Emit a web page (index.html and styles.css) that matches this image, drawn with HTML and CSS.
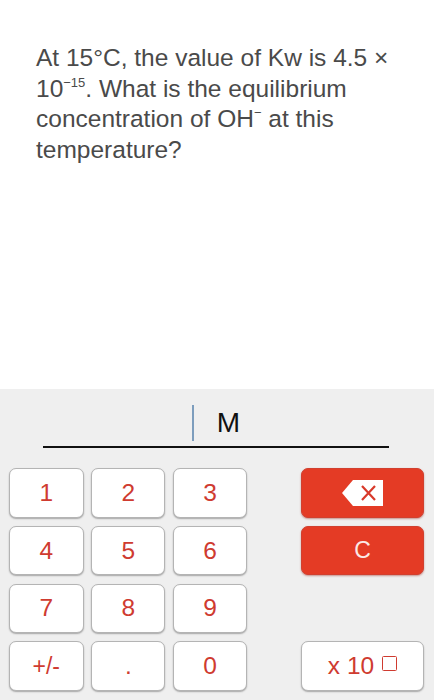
FILE: index.html
```html
<!DOCTYPE html>
<html>
<head>
<meta charset="utf-8">
<link rel="stylesheet" href="styles.css">
</head>
<body>
<div class="question">
  <p>At 15°C, the value of Kw is 4.5 × 10<sup>−15</sup>. What is the equilibrium concentration of OH<sup>−</sup> at this temperature?</p>
</div>
<div class="panel">
  <div class="display">
    <span class="cursor"></span>
    <span class="unit">M</span>
  </div>
  <div class="rule"></div>
  <div class="keys">
    <button class="key">1</button>
    <button class="key">2</button>
    <button class="key">3</button>
    <span class="spacer"></span>
    <button class="key red">
      <svg width="42" height="26" viewBox="0 0 42 26">
        <path d="M11 0 H41 V26 H11 L0 13 Z" fill="#fff"/>
        <path d="M20 6 L33 20 M33 6 L20 20" stroke="#d8392a" stroke-width="2.2" fill="none"/>
      </svg>
    </button>
    <button class="key">4</button>
    <button class="key">5</button>
    <button class="key">6</button>
    <span class="spacer"></span>
    <button class="key red"><span class="ctext">C</span></button>
    <button class="key">7</button>
    <button class="key">8</button>
    <button class="key">9</button>
    <span class="spacer"></span>
    <span class="spacer"></span>
    <button class="key small">+/-</button>
    <button class="key">.</button>
    <button class="key">0</button>
    <span class="spacer"></span>
    <button class="key exp">x 10<span class="box"></span></button>
  </div>
</div>
</body>
</html>
```

FILE: styles.css
```css
html, body {
  margin: 0;
  padding: 0;
  background: #fff;
  font-family: "Liberation Sans", Arial, sans-serif;
}
body {
  width: 434px;
  height: 700px;
  display: flex;
  flex-direction: column;
}
.question {
  height: 389px;
  box-sizing: border-box;
  padding: 43px 24px 0 36px;
}
.question p {
  margin: 0;
  font-size: 24.5px;
  line-height: 30.5px;
  color: #4a4a4a;
}
.question sup {
  font-size: 13px;
  line-height: 0;
  vertical-align: 10px;
}
.panel {
  flex: 1;
  background: #efefef;
  padding-top: 16px;
}
.display {
  height: 36px;
  display: flex;
  align-items: center;
  justify-content: center;
  gap: 23px;
  padding-right: 2px;
}
.cursor {
  width: 2px;
  height: 36px;
  background: #7d9dbd;
}
.unit {
  font-size: 28px;
  color: #111;
  line-height: 36px;
}
.rule {
  height: 2px;
  margin: 5px 45px 0 43px;
  background: #111;
}
.keys {
  margin-top: 20px;
  padding: 0 10px 0 9px;
  display: grid;
  grid-template-columns: 74.5px 74px 74px 1fr 123px;
  grid-auto-rows: 49.5px;
  column-gap: 7.8px;
  row-gap: 8.3px;
}
.key {
  margin: 0;
  padding: 0;
  border: 1px solid #b4b4b4;
  border-radius: 7px;
  background: #fff;
  box-shadow: 0 1px 1.5px rgba(0, 0, 0, 0.3);
  font-family: "Liberation Sans", Arial, sans-serif;
  font-size: 24.5px;
  color: #cf3b30;
  display: flex;
  align-items: center;
  justify-content: center;
}
.key.small {
  font-size: 23px;
}
.key.red {
  background: #e43b25;
  border-color: #d1402f;
  box-shadow: 0 1px 2px rgba(150, 30, 20, 0.45);
}
.ctext {
  color: #fbe9e6;
  font-size: 23px;
}
.exp {
  gap: 8px;
  align-items: center;
}
.box {
  width: 13px;
  height: 13px;
  border: 1.6px solid #cf3b30;
  border-radius: 1.5px;
  margin-top: -6px;
}
.spacer {
  display: block;
}
```
